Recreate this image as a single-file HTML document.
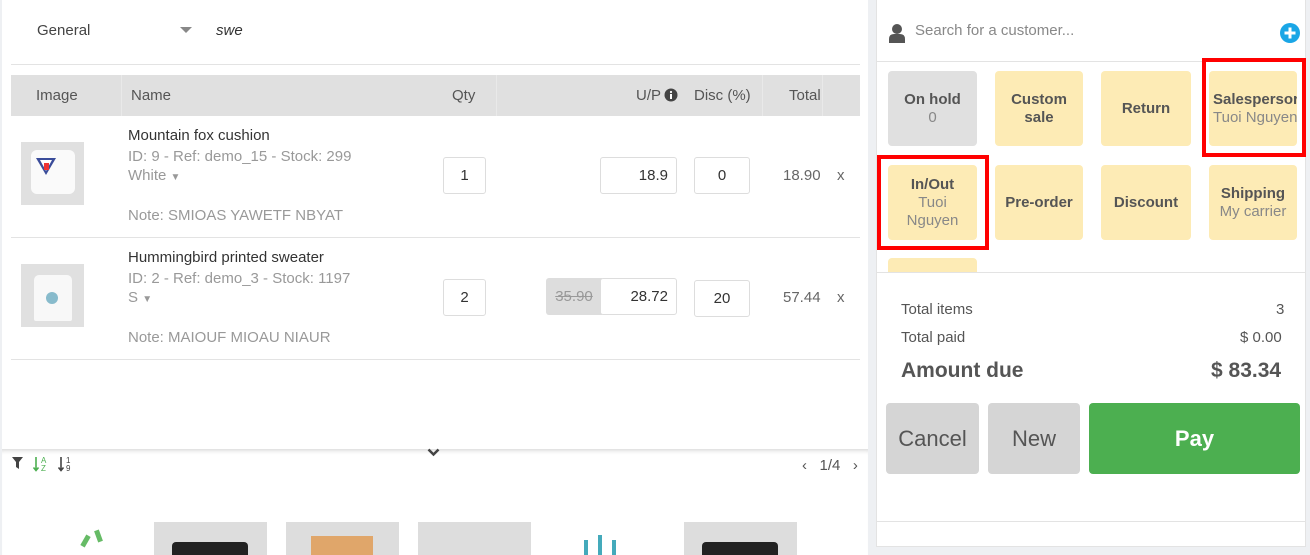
<!DOCTYPE html>
<html><head><meta charset="utf-8"><style>
*{box-sizing:border-box;margin:0;padding:0}
body{width:1310px;height:555px;background:#eef0f3;font-family:"Liberation Sans",sans-serif;position:relative;overflow:hidden;color:#333}
.a{position:absolute}
.g{color:#999}
.inp{position:absolute;border:1px solid #ddd;border-radius:3px;background:#fff;font-size:15px;color:#333;height:37px;line-height:35px}
.tile{position:absolute;width:89px;height:75px;background:#fdebb5;border-radius:4px;text-align:center;font-size:15px;color:#555;font-weight:bold;display:flex;flex-direction:column;justify-content:center;line-height:18px}
.tile span{font-weight:normal;color:#888}
.red{position:absolute;border:4px solid #f00}
.th{position:absolute;top:75px;height:41px;line-height:41px;font-size:15px;color:#555}
</style></head><body>
<div class="a" style="left:2px;top:0;width:866px;height:449px;background:#fff"></div>
<div class="a" style="left:2px;top:449px;width:866px;height:106px;background:#fff;border-top:1px solid #e3e3e3;box-shadow:inset 0 4px 4px -3px #ddd"></div>
<div class="a" style="left:37px;top:22px;font-size:15px;color:#444">General</div>
<div class="a" style="left:180px;top:27px;width:0;height:0;border-left:6px solid transparent;border-right:6px solid transparent;border-top:6px solid #888"></div>
<div class="a" style="left:216px;top:22px;font-size:15px;font-style:italic;color:#333">swe</div>
<div class="a" style="left:11px;top:64px;width:849px;height:1px;background:#e3e3e3"></div>
<div class="a" style="left:11px;top:75px;width:849px;height:41px;background:#e0e0e0"></div>
<div class="a" style="left:121px;top:75px;width:1px;height:41px;background:#e9e9e9"></div>
<div class="a" style="left:496px;top:75px;width:1px;height:41px;background:#e9e9e9"></div>
<div class="a" style="left:762px;top:75px;width:1px;height:41px;background:#e9e9e9"></div>
<div class="a" style="left:822px;top:75px;width:1px;height:41px;background:#e9e9e9"></div>
<div class="th" style="left:36px">Image</div>
<div class="th" style="left:131px">Name</div>
<div class="th" style="left:452px">Qty</div>
<div class="th" style="left:636px">U/P</div>
<svg class="a" style="left:664px;top:88px" width="14" height="14" viewBox="0 0 14 14"><circle cx="7" cy="7" r="6.5" fill="#444"/><rect x="6" y="6" width="2" height="5" fill="#fff"/><circle cx="7" cy="4" r="1.1" fill="#fff"/></svg>
<div class="th" style="left:694px">Disc (%)</div>
<div class="th" style="left:789px">Total</div>
<div class="a" style="left:21px;top:142px;width:63px;height:63px;background:#e0e0e0"></div>
<div class="a" style="left:31px;top:150px;width:44px;height:44px;background:#fafafa;border-radius:6px"></div>
<svg class="a" style="left:36px;top:157px" width="20" height="20" viewBox="0 0 20 20"><polygon points="0,1 20,1 10,18" fill="#3a4c9a"/><polygon points="4,3 16,3 10,14" fill="#fff"/><rect x="8" y="6" width="5" height="7" fill="#e33"/></svg>
<div class="a" style="left:128px;top:127px;font-size:15px;color:#333">Mountain fox cushion</div>
<div class="a g" style="left:128px;top:148px;font-size:15px">ID: 9 - Ref: demo_15 - Stock: 299</div>
<div class="a g" style="left:128px;top:167px;font-size:15px">White <span style="font-size:10px">▼</span></div>
<div class="a g" style="left:128px;top:207px;font-size:15px">Note: SMIOAS YAWETF NBYAT</div>
<div class="inp" style="left:443px;top:157px;width:43px;text-align:center">1</div>
<div class="inp" style="left:600px;top:157px;width:77px;text-align:right;padding-right:8px">18.9</div>
<div class="inp" style="left:694px;top:157px;width:56px;text-align:center">0</div>
<div class="a" style="left:783px;top:167px;font-size:15px;color:#666">18.90</div>
<div class="a" style="left:837px;top:167px;font-size:15px;color:#666">x</div>
<div class="a" style="left:11px;top:237px;width:849px;height:1px;background:#e3e3e3"></div>
<div class="a" style="left:21px;top:264px;width:63px;height:63px;background:#e0e0e0"></div>
<div class="a" style="left:34px;top:275px;width:38px;height:46px;background:#f8f8f8;border-radius:5px 5px 2px 2px"></div>
<div class="a" style="left:46px;top:292px;width:12px;height:12px;background:#8bc;border-radius:50%"></div>
<div class="a" style="left:128px;top:249px;font-size:15px;color:#333">Hummingbird printed sweater</div>
<div class="a g" style="left:128px;top:270px;font-size:15px">ID: 2 - Ref: demo_3 - Stock: 1197</div>
<div class="a g" style="left:128px;top:289px;font-size:15px">S <span style="font-size:10px">▼</span></div>
<div class="a g" style="left:128px;top:329px;font-size:15px">Note: MAIOUF MIOAU NIAUR</div>
<div class="inp" style="left:443px;top:279px;width:43px;text-align:center">2</div>
<div class="a" style="left:546px;top:278px;width:56px;height:37px;background:#ddd;border-radius:3px 0 0 3px;font-size:15px;line-height:37px;color:#999;text-align:center;text-decoration:line-through">35.90</div>
<div class="inp" style="left:600px;top:278px;width:77px;text-align:right;padding-right:8px">28.72</div>
<div class="inp" style="left:694px;top:280px;width:56px;text-align:center">20</div>
<div class="a" style="left:783px;top:289px;font-size:15px;color:#666">57.44</div>
<div class="a" style="left:837px;top:289px;font-size:15px;color:#666">x</div>
<div class="a" style="left:11px;top:359px;width:849px;height:1px;background:#e3e3e3"></div>
<svg class="a" style="left:427px;top:448px" width="13" height="9" viewBox="0 0 13 9"><path d="M1.5 1.5 L6.5 6.5 L11.5 1.5" stroke="#444" stroke-width="2.5" fill="none"/></svg>
<svg class="a" style="left:12px;top:457px" width="11" height="12" viewBox="0 0 11 12"><path d="M0 0H11L7 5V12L4 10V5Z" fill="#444"/></svg>
<svg class="a" style="left:33px;top:456px" width="16" height="16" viewBox="0 0 16 16"><path d="M3 1V14M0.5 11.5L3 14.5L5.5 11.5" stroke="#4caf50" stroke-width="1.6" fill="none"/><text x="8" y="7" font-size="8" fill="#4caf50" font-family="Liberation Sans">A</text><text x="8" y="15" font-size="8" fill="#4caf50" font-family="Liberation Sans">Z</text></svg>
<svg class="a" style="left:58px;top:456px" width="16" height="16" viewBox="0 0 16 16"><path d="M3 1V14M0.5 11.5L3 14.5L5.5 11.5" stroke="#444" stroke-width="1.6" fill="none"/><text x="8" y="7" font-size="8" fill="#444" font-family="Liberation Sans">1</text><text x="8" y="15" font-size="8" fill="#444" font-family="Liberation Sans">9</text></svg>
<div class="a" style="left:802px;top:457px;font-size:15px;color:#555">‹&nbsp;&nbsp;&nbsp;1/4&nbsp;&nbsp;&nbsp;›</div>
<div class="a" style="left:154px;top:522px;width:113px;height:33px;background:#ddd"></div>
<div class="a" style="left:172px;top:542px;width:76px;height:13px;background:#222;border-radius:4px 4px 0 0"></div>
<div class="a" style="left:286px;top:522px;width:113px;height:33px;background:#ddd"></div>
<div class="a" style="left:311px;top:536px;width:62px;height:19px;background:#e0a66a"></div>
<div class="a" style="left:418px;top:522px;width:113px;height:33px;background:#ddd"></div>
<div class="a" style="left:684px;top:522px;width:113px;height:33px;background:#ddd"></div>
<div class="a" style="left:702px;top:542px;width:76px;height:13px;background:#222;border-radius:4px 4px 0 0"></div>
<div class="a" style="left:83px;top:535px;width:5px;height:12px;background:#6b6;transform:rotate(30deg)"></div>
<div class="a" style="left:96px;top:530px;width:5px;height:12px;background:#6b6;transform:rotate(-20deg)"></div>
<div class="a" style="left:584px;top:540px;width:4px;height:15px;background:#4ab"></div>
<div class="a" style="left:598px;top:535px;width:4px;height:20px;background:#4ab"></div>
<div class="a" style="left:612px;top:540px;width:4px;height:15px;background:#4ab"></div>
<div class="a" style="left:876px;top:0;width:430px;height:547px;background:#fff;border:1px solid #e3e3e3;border-top:none"></div>
<svg class="a" style="left:889px;top:23px" width="16" height="20" viewBox="0 0 16 20"><circle cx="8" cy="6" r="5" fill="#555"/><path d="M0 20V16Q0 11 5 11H11Q16 11 16 16V20Z" fill="#555"/></svg>
<div class="a" style="left:915px;top:22px;font-size:15px;color:#888">Search for a customer...</div>
<svg class="a" style="left:1280px;top:23px" width="20" height="20" viewBox="0 0 20 20"><circle cx="10" cy="10" r="10" fill="#1aa6e6"/><rect x="8.5" y="4.5" width="3" height="11" fill="#fff"/><rect x="4.5" y="8.5" width="11" height="3" fill="#fff"/></svg>
<div class="a" style="left:877px;top:61px;width:429px;height:1px;background:#e3e3e3"></div>
<div class="tile" style="left:888px;top:71px;background:#e0e0e0">On hold<span>0</span></div>
<div class="tile" style="left:995px;top:71px;width:88px">Custom<br>sale</div>
<div class="tile" style="left:1101px;top:71px;width:90px">Return</div>
<div class="tile" style="left:1209px;top:71px;width:88px;overflow:hidden;white-space:nowrap;align-items:flex-start;padding-left:4px">Salespersor<span>Tuoi Nguyen</span></div>
<div class="tile" style="left:888px;top:165px">In/Out<span>Tuoi<br>Nguyen</span></div>
<div class="tile" style="left:995px;top:165px;width:88px">Pre-order</div>
<div class="tile" style="left:1101px;top:165px;width:90px">Discount</div>
<div class="tile" style="left:1209px;top:165px;width:88px">Shipping<span>My carrier</span></div>
<div class="a" style="left:888px;top:258px;width:89px;height:14px;background:#fdebb5;border-radius:4px 4px 0 0"></div>
<div class="red" style="left:1202px;top:58px;width:104px;height:99px"></div>
<div class="red" style="left:877px;top:155px;width:112px;height:95px"></div>
<div class="a" style="left:877px;top:272px;width:429px;height:1px;background:#e3e3e3"></div>
<div class="a" style="left:901px;top:301px;font-size:15px;color:#555">Total items</div>
<div class="a" style="left:1276px;top:301px;font-size:15px;color:#555">3</div>
<div class="a" style="left:901px;top:329px;font-size:15px;color:#555">Total paid</div>
<div class="a" style="left:1240px;top:329px;font-size:15px;color:#555">$ 0.00</div>
<div class="a" style="left:901px;top:359px;font-size:21px;font-weight:bold;color:#555">Amount due</div>
<div class="a" style="left:1211px;top:359px;font-size:21px;font-weight:bold;color:#555">$ 83.34</div>
<div class="a" style="left:886px;top:403px;width:93px;height:71px;background:#d5d5d5;border-radius:4px;text-align:center;line-height:71px;font-size:22px;color:#555">Cancel</div>
<div class="a" style="left:988px;top:403px;width:92px;height:71px;background:#d5d5d5;border-radius:4px;text-align:center;line-height:71px;font-size:22px;color:#555">New</div>
<div class="a" style="left:1089px;top:403px;width:211px;height:71px;background:#4caf50;border-radius:4px;text-align:center;line-height:71px;font-size:22px;color:#fff;font-weight:bold">Pay</div>
<div class="a" style="left:877px;top:521px;width:429px;height:1px;background:#e3e3e3"></div>
</body></html>
